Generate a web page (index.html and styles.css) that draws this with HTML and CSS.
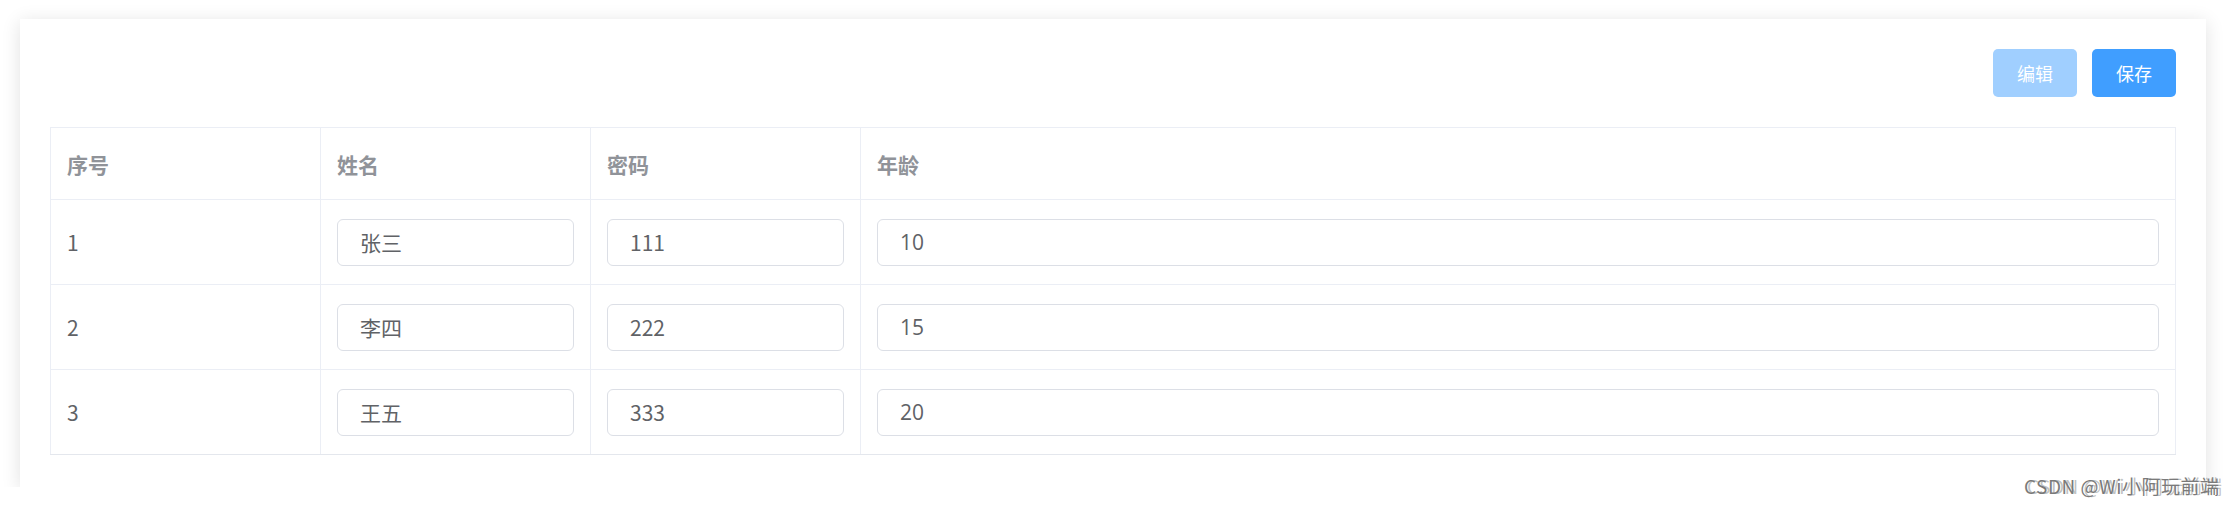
FILE: index.html
```html
<!DOCTYPE html>
<html lang="zh-CN">
<head>
    <meta charset="UTF-8">
    <meta name="viewport" content="width=device-width, initial-scale=1.0">
    <title>用户表格</title>
    <link rel="stylesheet" href="styles.css">
</head>
<body>
    <div class="card">
        <div class="toolbar">
            <button class="btn btn-edit" disabled>编辑</button>
            <button class="btn btn-save">保存</button>
        </div>

        <table class="grid">
            <colgroup>
                <col class="col-narrow">
                <col class="col-narrow">
                <col class="col-narrow">
                <col>
            </colgroup>
            <thead>
                <tr><th>序号</th><th>姓名</th><th>密码</th><th>年龄</th></tr>
            </thead>
            <tbody>
                <tr>
                    <td>1</td>
                    <td><input class="field" type="text" value="张三"></td>
                    <td><input class="field" type="text" value="111"></td>
                    <td><input class="field field-num" type="text" value="10"></td>
                </tr>
                <tr>
                    <td>2</td>
                    <td><input class="field" type="text" value="李四"></td>
                    <td><input class="field" type="text" value="222"></td>
                    <td><input class="field field-num" type="text" value="15"></td>
                </tr>
                <tr>
                    <td>3</td>
                    <td><input class="field" type="text" value="王五"></td>
                    <td><input class="field" type="text" value="333"></td>
                    <td><input class="field field-num" type="text" value="20"></td>
                </tr>
            </tbody>
        </table>
    </div>

    <div class="watermark">CSDN @Wi小阿玩前端</div>
</body>
</html>
```

FILE: styles.css
```css
body { margin: 0; background: #fff; font-family: "Noto Sans CJK SC", "Microsoft YaHei", sans-serif; color: #606266; }
.card { margin: 19px 18px 0 20px; height: 468px; box-sizing: border-box; padding: 30px; background: #fff; box-shadow: 0 3px 18px rgba(0, 0, 0, 0.12); }
.toolbar { display: flex; justify-content: flex-end; gap: 15px; margin-bottom: 30px; }
.btn { width: 84px; height: 48px; border: none; border-radius: 5px; color: #fff; font-family: inherit; font-size: 18px; padding: 0; cursor: pointer; }
.btn-edit { background: #a0cfff; cursor: not-allowed; }
.btn-save { background: #409eff; }
.grid { width: 100%; border-collapse: collapse; table-layout: fixed; font-size: 21px; }
.col-narrow { width: 270px; }
.grid th, .grid td { border: 1px solid #ebeef5; padding: 0 16px; text-align: left; }
.grid th { height: 71px; color: #909399; font-weight: bold; }
.grid td { height: 84px; }
.grid tbody tr:last-child td { border-bottom-color: #e4e7ed; }
.field { display: block; width: 100%; height: 47px; box-sizing: border-box; border: 1px solid #dcdfe6; border-radius: 6px; padding: 0 22px; font-family: inherit; font-size: 21px; color: #606266; background: #fff; outline: none; }
.field-num { font-family: "Open Sans", sans-serif; }
.watermark { position: absolute; left: 2024px; top: 472px; font-size: 19px; letter-spacing: 0.5px; color: #7a7a7a; white-space: nowrap; text-shadow: 3px 0 0 rgba(120, 120, 120, 0.45), 1px 1px 0 #fff; }
```
